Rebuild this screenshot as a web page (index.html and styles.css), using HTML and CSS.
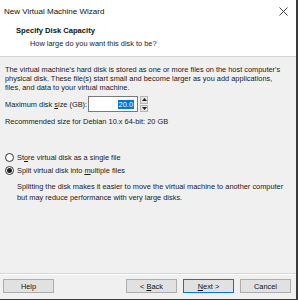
FILE: index.html
```html
<!DOCTYPE html>
<html lang="en">
<head>
  <meta charset="UTF-8" />
  <title>New Virtual Machine Wizard</title>
  <link rel="stylesheet" href="styles.css">
</head>
<body>
  <div class="window">

    <!-- title bar + header -->
    <div class="top">
      <div class="titlebar">
        <span class="title">New Virtual Machine Wizard</span>
        <span class="close">
          <svg width="9" height="9" viewBox="0 0 9 9"><path d="M0.5 0.5 L8.5 8.5 M8.5 0.5 L0.5 8.5" stroke="#444" stroke-width="1"/></svg>
        </span>
      </div>
      <div class="header">
        <div class="heading">Specify Disk Capacity</div>
        <div class="subheading">How large do you want this disk to be?</div>
      </div>
    </div>

    <!-- body -->
    <div class="content">
      <p class="intro">The virtual machine's hard disk is stored as one or more files on the host computer's physical disk. These file(s) start small and become larger as you add applications, files, and data to your virtual machine.</p>

      <div class="size-row">
        <label>Maximum disk <u>s</u>ize (GB):</label>
        <div class="field"><span class="sel">20.0</span></div>
        <div class="spin">
          <span class="spin-btn"><svg width="5" height="3" viewBox="0 0 5 3"><path d="M0 3 L2.5 0 L5 3 Z" fill="#222"/></svg></span>
          <span class="spin-btn"><svg width="5" height="3" viewBox="0 0 5 3"><path d="M0 0 L2.5 3 L5 0 Z" fill="#222"/></svg></span>
        </div>
      </div>

      <p class="recommend">Recommended size for Debian 10.x 64-bit: 20 GB</p>

      <div class="options">
        <div class="radio"><span class="dot"></span><span>St<u>o</u>re virtual disk as a single file</span></div>
        <div class="radio checked"><span class="dot"></span><span>Split virtual disk into <u>m</u>ultiple files</span></div>
        <p class="note">Splitting the disk makes it easier to move the virtual machine to another computer but may reduce performance with very large disks.</p>
      </div>
    </div>

    <!-- buttons -->
    <div class="footer">
      <button class="btn">Help</button>
      <div class="spacer"></div>
      <button class="btn">&lt; <u>B</u>ack</button>
      <button class="btn primary"><u>N</u>ext &gt;</button>
      <button class="btn">Cancel</button>
    </div>
  </div>
</body>
</html>
```

FILE: styles.css
```css
* { box-sizing: border-box; margin: 0; padding: 0 }
html, body {
  width: 100%; height: 100%;
  background: #f0f0f0;
  font-family: 'Liberation Sans', Arial, sans-serif;
  font-size: 7.4px;
  color: #1a1a1a;
  overflow: hidden;
}

/*–––– Window ––––*/
.window {
  width: 298px; height: 300px;
  display: flex; flex-direction: column;
  background: #f0f0f0;
  border-right: 2px solid #3a3a3a;
  border-bottom: 1px solid #3a3a3a;
}

/*–––– Title + Header ––––*/
.top {
  background: #fff;
  border-bottom: 1px solid #d5d5d5;
  height: 57px;
}
.titlebar {
  height: 22px;
  display: flex; align-items: center; justify-content: space-between;
  padding: 0 8px 0 4px;
}
.title { font-size: 8px; color: #111 }
.close { display: flex }
.header { padding: 4px 0 0 16px }
.heading { font-weight: bold; font-size: 7.6px; line-height: 10px; color: #111 }
.subheading { padding: 3px 0 0 14px; line-height: 10px }

/*–––– Content ––––*/
.content {
  flex: 1;
  padding: 8px 5px 0 5px;
  border-bottom: 1px solid #d8d8d8;
}
.intro { line-height: 9px; max-width: 281px }
.size-row {
  display: flex; align-items: center;
  margin-top: 4px;
  height: 16px;
}
.size-row label { width: 83px }
.field {
  width: 50px; height: 16px;
  background: #fff;
  border: 1px solid #7a7a7a;
  display: flex; align-items: center; justify-content: flex-end;
  padding-right: 3px;
}
.sel { background: #0078d7; color: #fff; line-height: 9px; padding: 0 1px }
.spin {
  margin-left: 2px;
  display: flex; flex-direction: column; gap: 1px;
  height: 16px;
}
.spin-btn {
  width: 8px; flex: 1;
  display: flex; align-items: center; justify-content: center;
  background: #e5e5e5;
  border: 1px solid #b5b5b5;
}
.recommend { margin-top: 5px; line-height: 9px }

.options { margin-top: 25px }
.radio {
  display: flex; align-items: center;
  height: 12px; margin-bottom: 1px;
}
.dot {
  width: 9px; height: 9px;
  border: 1px solid #333; border-radius: 50%;
  background: #fff;
  margin-right: 3px;
  display: flex; align-items: center; justify-content: center;
}
.checked .dot::after {
  content: '';
  width: 5px; height: 5px; border-radius: 50%;
  background: #222;
}
.note { padding: 4px 0 0 12px; line-height: 11px }

/*–––– Footer ––––*/
.footer {
  height: 25px;
  border-top: 1px solid #fff;
  display: flex; align-items: center;
  padding: 0 5px 2px 3px;
  gap: 6px;
}
.spacer { flex: 1 }
.btn {
  width: 51px; height: 14px;
  font-family: inherit; font-size: 7.4px; color: #111;
  background: #e1e1e1;
  border: 1px solid #adadad;
}
.btn.primary { border-color: #0078d7 }
```
